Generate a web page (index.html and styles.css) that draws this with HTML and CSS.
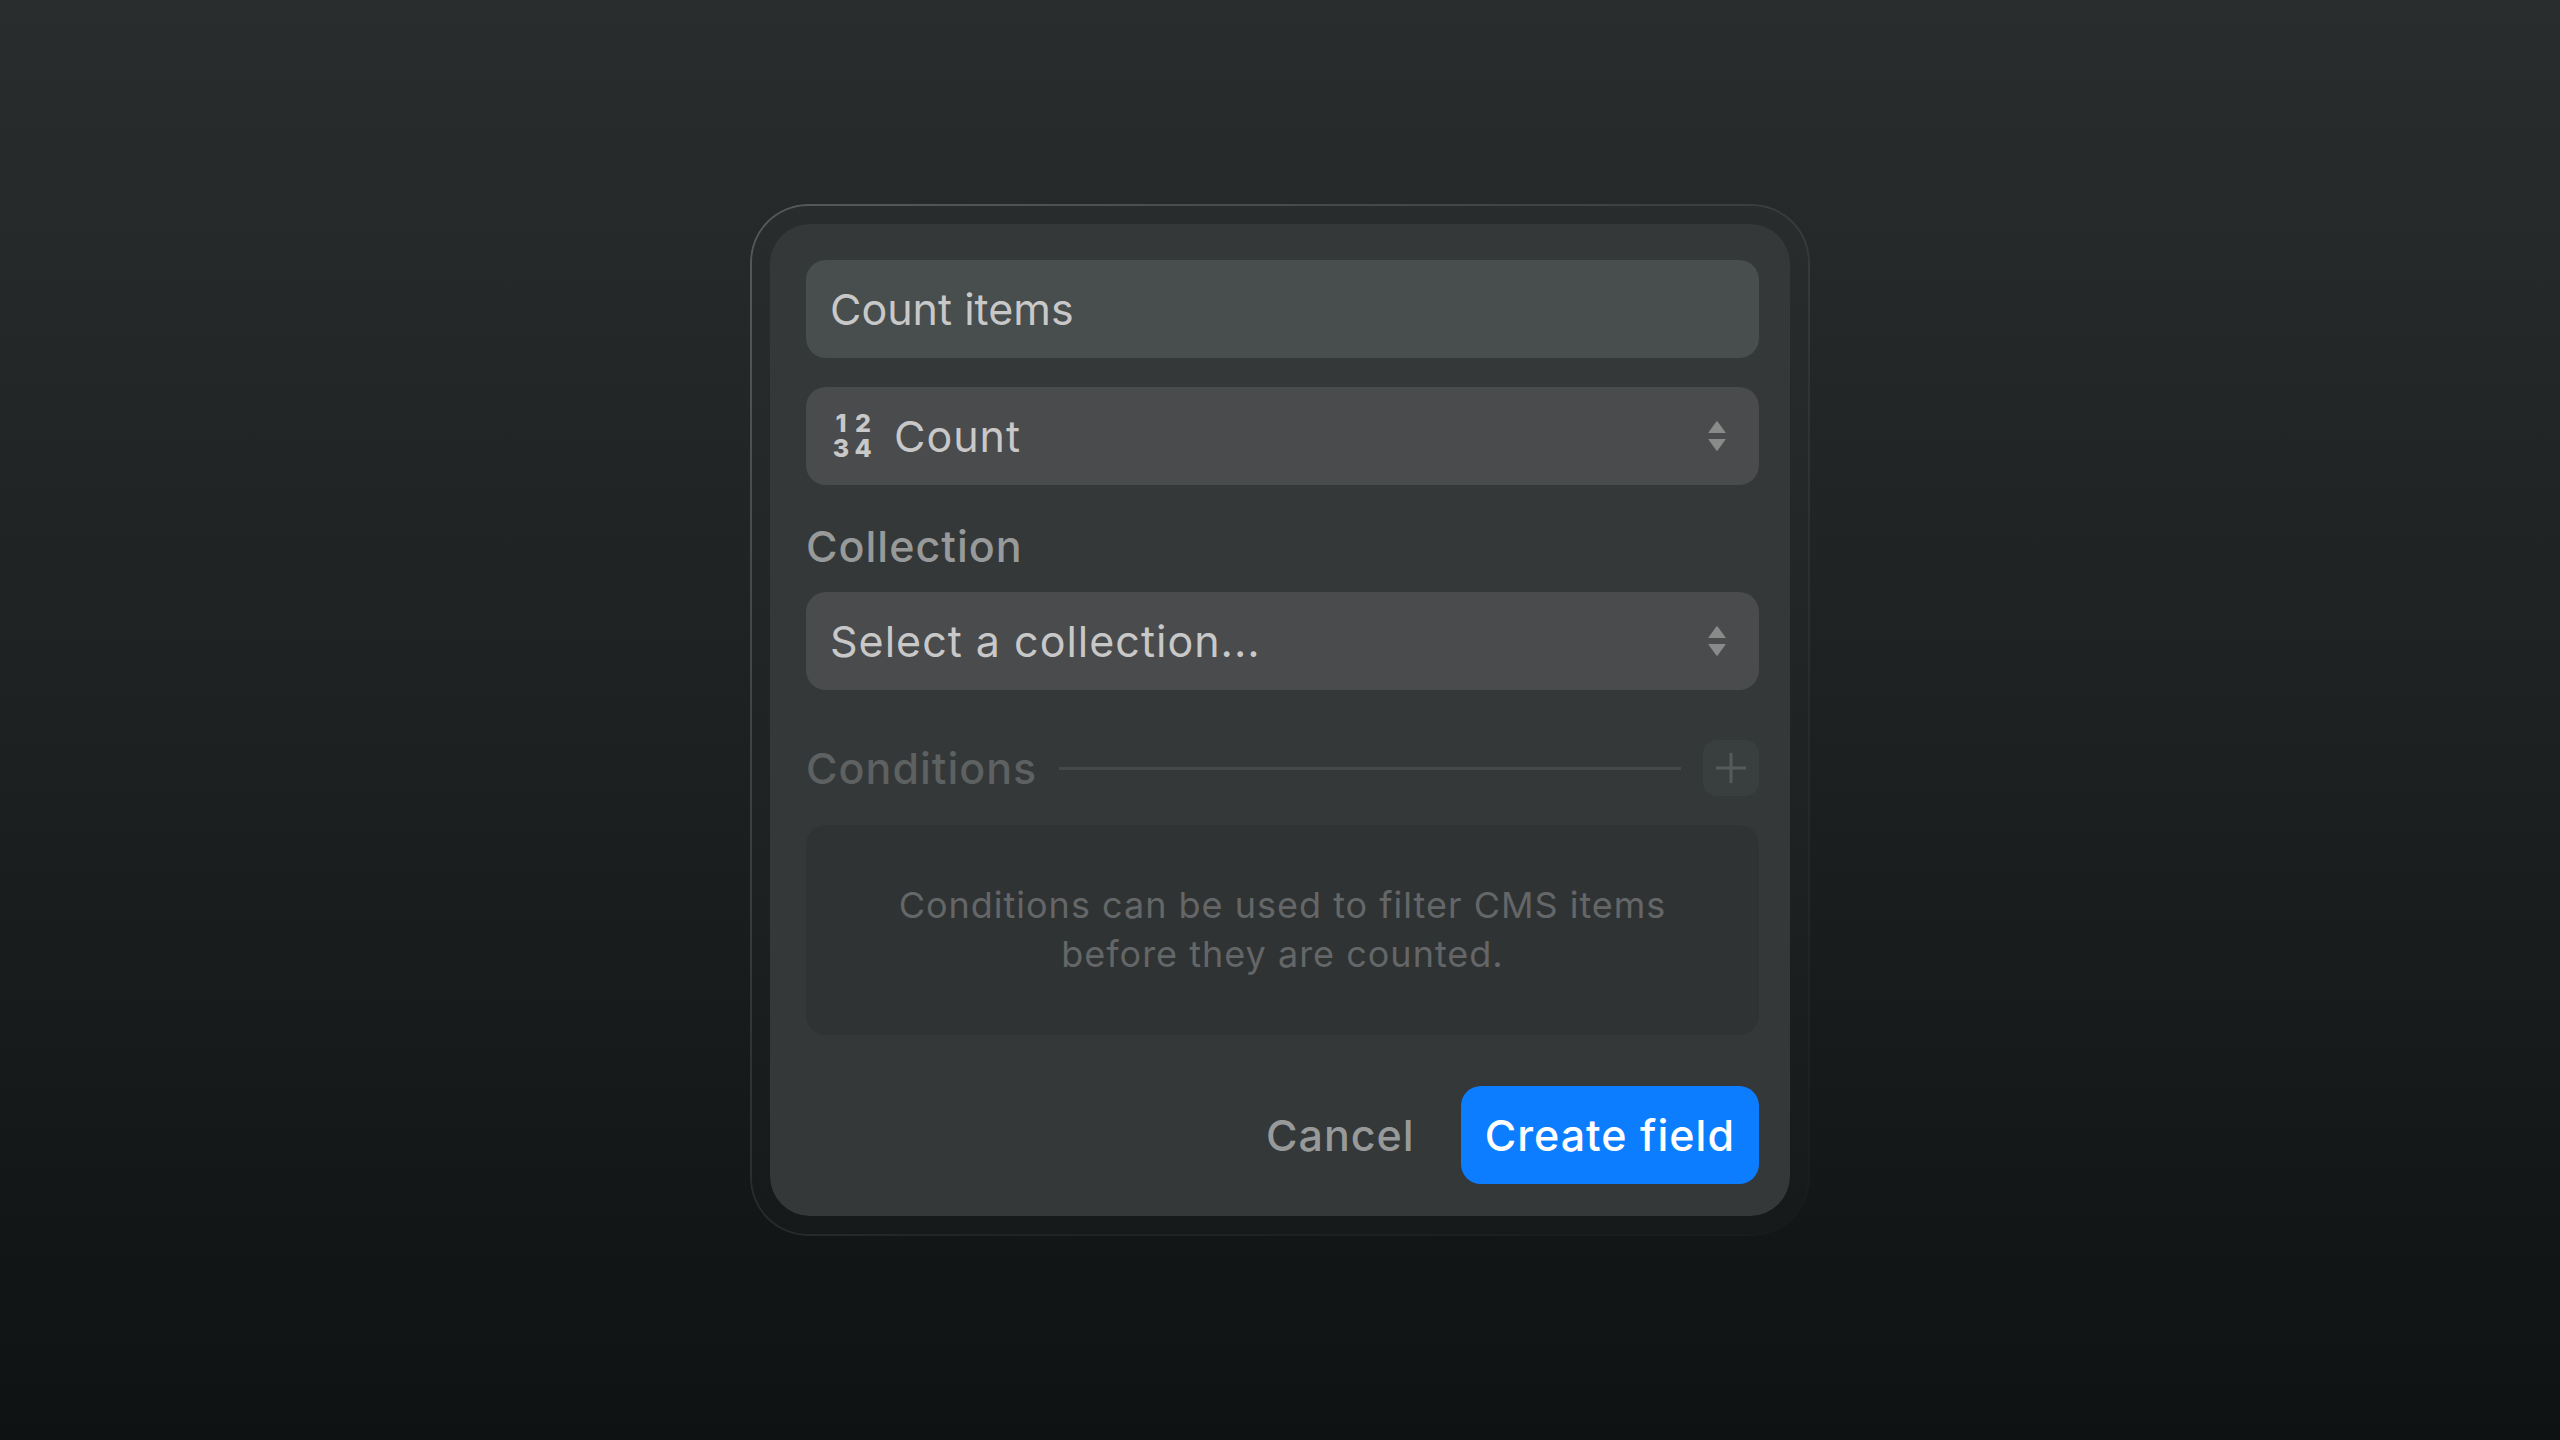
FILE: index.html
```html
<!DOCTYPE html>
<html lang="en">
  <head>
    <meta charset="UTF-8" />
    <meta name="viewport" content="width=device-width, initial-scale=1.0" />
    <title>Create field</title>
    <link rel="stylesheet" href="styles.css" />
  </head>
  <body>
    <main class="frame">
      <form class="panel" action="">
        <input class="field" type="text" value="Count items" aria-label="Field name" />

        <div class="field select">
          <span class="digits" aria-hidden="true">
            <span>1</span><span>2</span><span>3</span><span>4</span>
          </span>
          <select aria-label="Field type">
            <option>Count</option>
          </select>
          <svg class="arrows" viewBox="0 0 18 30" aria-hidden="true">
            <path d="M8.2 0.8Q9 -0.2 9.8 0.8L17.6 11.4Q17.8 12 17.2 12H0.8Q0.2 12 0.4 11.4z" />
            <path d="M8.2 29.2Q9 30.2 9.8 29.2L17.6 18.6Q17.8 18 17.2 18H0.8Q0.2 18 0.4 18.6z" />
          </svg>
        </div>

        <label class="label" for="collection">Collection</label>
        <div class="field select">
          <select id="collection">
            <option>Select a collection...</option>
          </select>
          <svg class="arrows" viewBox="0 0 18 30" aria-hidden="true">
            <path d="M8.2 0.8Q9 -0.2 9.8 0.8L17.6 11.4Q17.8 12 17.2 12H0.8Q0.2 12 0.4 11.4z" />
            <path d="M8.2 29.2Q9 30.2 9.8 29.2L17.6 18.6Q17.8 18 17.2 18H0.8Q0.2 18 0.4 18.6z" />
          </svg>
        </div>

        <section class="conditions">
          <div class="conditions-head">
            <h2>Conditions</h2>
            <hr />
            <button class="add" type="button" aria-label="Add condition" disabled>
              <svg viewBox="0 0 30 30" aria-hidden="true">
                <path d="M15 0V30M0 15H30" />
              </svg>
            </button>
          </div>
          <p class="hint">Conditions can be used to filter CMS items before they are counted.</p>
        </section>

        <div class="actions">
          <button class="btn" type="button">Cancel</button>
          <button class="btn primary" type="submit">Create field</button>
        </div>
      </form>
    </main>
  </body>
</html>
```

FILE: styles.css
```css
* {
  box-sizing: border-box;
}

body {
  margin: 0;
  min-height: 100vh;
  display: flex;
  align-items: center;
  justify-content: center;
  background: linear-gradient(#292d2d, #1c2021 53%, #0e1213);
  color: #c8c8c9;
  font-family: Inter, sans-serif;
  font-size: 43px;
  line-height: 52px;
}

input,
select,
button {
  color: inherit;
  font: inherit;
  letter-spacing: inherit;
  border: none;
}

/* thin outline around the panel, fading to the bottom right */
.frame {
  position: relative;
  width: 100%;
  max-width: 1060px;
  padding: 20px;
  border-radius: 58px;
  background: rgba(255, 255, 255, 0.015);
}

.frame::before {
  content: "";
  position: absolute;
  inset: 0;
  padding: 2px;
  border-radius: inherit;
  background: linear-gradient(135deg, rgba(255, 255, 255, 0.22), rgba(255, 255, 255, 0.05) 60%, rgba(255, 255, 255, 0.01));
  mask: linear-gradient(#000 0 0) content-box exclude, linear-gradient(#000 0 0);
  pointer-events: none;
}

.panel {
  display: flex;
  flex-direction: column;
  padding: 36px 31px 32px 36px;
  border-radius: 40px;
  background: #353839;
}

.field {
  width: 100%;
  height: 98px;
  padding: 0 24px;
  border-radius: 20px;
  background: #484d4d;
}

/* selects */
.select {
  display: flex;
  align-items: center;
  gap: 20px;
  padding-right: 33px;
  background: #4a4b4c;
  letter-spacing: 1px;
}

.field + .select {
  margin-top: 29px;
}

.select select {
  flex: 1;
  min-width: 0;
  appearance: none;
  background: none;
  padding: 0;
}

.digits {
  display: grid;
  grid-template-columns: 22px 22px;
  justify-items: center;
  font-size: 25px;
  font-weight: 800;
  line-height: 25px;
  letter-spacing: 0;
}

.arrows {
  width: 18px;
  height: 30px;
  fill: #898a8a;
}

.label {
  margin: 35px 0 20px;
  color: #989a9a;
  font-weight: 500;
  letter-spacing: 1px;
}

/* conditions */
.conditions {
  margin-top: 50px;
  color: #5d6161;
}

.conditions-head {
  display: flex;
  align-items: center;
  gap: 22px;
}

h2 {
  margin: 0;
  font-size: 43px;
  font-weight: 500;
  letter-spacing: 1px;
}

hr {
  flex: 1;
  height: 3px;
  margin: 0;
  border: none;
  background: #454949;
}

.add {
  display: flex;
  align-items: center;
  justify-content: center;
  width: 56px;
  height: 56px;
  padding: 0;
  border-radius: 14px;
  background: #393e3e;
}

.add svg {
  width: 30px;
  height: 30px;
  stroke: #565a5a;
  stroke-width: 3;
}

.hint {
  margin: 29px 0 0;
  padding: 56px 80px;
  border-radius: 20px;
  background: #303334;
  color: #646667;
  font-size: 36px;
  line-height: 49px;
  letter-spacing: 1px;
  text-align: center;
}

/* buttons */
.actions {
  display: flex;
  justify-content: flex-end;
  gap: 22px;
  margin-top: 51px;
}

.btn {
  height: 98px;
  padding: 0 24px;
  border-radius: 20px;
  background: none;
  color: #989a9a;
  font-weight: 500;
  letter-spacing: 1px;
}

.primary {
  background: #0d7dff;
  color: #fff;
}
```
